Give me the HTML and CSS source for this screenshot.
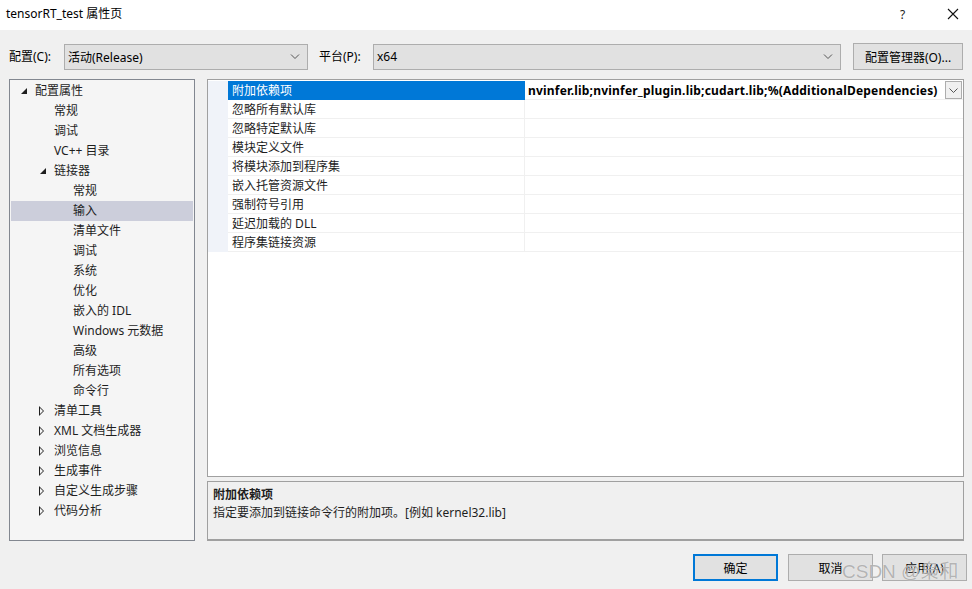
FILE: index.html
```html
<!DOCTYPE html>
<html lang="zh">
<head>
<meta charset="utf-8">
<title>tensorRT_test 属性页</title>
<link rel="stylesheet" href="styles.css">
</head>
<body>
<div class="window">
  <div class="titlebar">
    <span class="title">tensorRT_test 属性页</span>
    <span class="help">?</span>
    <span class="close"><svg width="12" height="12" viewBox="0 0 12 12"><path d="M1 1L11 11M11 1L1 11" stroke="#111" stroke-width="1.1" fill="none"/></svg></span>
  </div>

  <div class="toolbar">
    <span class="lbl lbl-cfg">配置(C):</span>
    <div class="combo combo-cfg"><span>活动(Release)</span><svg class="chev" width="10" height="6" viewBox="0 0 10 6"><path d="M1 0.5L5 4.5L9 0.5" stroke="#555" fill="none"/></svg></div>
    <span class="lbl lbl-plat">平台(P):</span>
    <div class="combo combo-plat"><span>x64</span><svg class="chev" width="10" height="6" viewBox="0 0 10 6"><path d="M1 0.5L5 4.5L9 0.5" stroke="#555" fill="none"/></svg></div>
    <div class="btn btn-mgr">配置管理器(O)...</div>
  </div>

  <div class="main">
    <div class="tree">
      <div class="node l0"><span class="exp"></span>配置属性</div>
      <div class="node l1">常规</div>
      <div class="node l1">调试</div>
      <div class="node l1">VC++ 目录</div>
      <div class="node l1 haskid"><span class="exp"></span>链接器</div>
      <div class="node l2">常规</div>
      <div class="node l2 sel">输入</div>
      <div class="node l2">清单文件</div>
      <div class="node l2">调试</div>
      <div class="node l2">系统</div>
      <div class="node l2">优化</div>
      <div class="node l2">嵌入的 IDL</div>
      <div class="node l2">Windows 元数据</div>
      <div class="node l2">高级</div>
      <div class="node l2">所有选项</div>
      <div class="node l2">命令行</div>
      <div class="node l1 haskid"><span class="col"></span>清单工具</div>
      <div class="node l1 haskid"><span class="col"></span>XML 文档生成器</div>
      <div class="node l1 haskid"><span class="col"></span>浏览信息</div>
      <div class="node l1 haskid"><span class="col"></span>生成事件</div>
      <div class="node l1 haskid"><span class="col"></span>自定义生成步骤</div>
      <div class="node l1 haskid"><span class="col"></span>代码分析</div>
    </div>

    <div class="right">
      <div class="grid">
        <div class="row selrow">
          <div class="gut"></div>
          <div class="name">附加依赖项</div>
          <div class="val"><span>nvinfer.lib;nvinfer_plugin.lib;cudart.lib;%(AdditionalDependencies)</span><div class="ddbtn"><svg width="9" height="5" viewBox="0 0 9 5"><path d="M0.5 0.5L4.5 4.5L8.5 0.5" stroke="#555" fill="none"/></svg></div></div>
        </div>
        <div class="row"><div class="gut"></div><div class="name">忽略所有默认库</div><div class="val"></div></div>
        <div class="row"><div class="gut"></div><div class="name">忽略特定默认库</div><div class="val"></div></div>
        <div class="row"><div class="gut"></div><div class="name">模块定义文件</div><div class="val"></div></div>
        <div class="row"><div class="gut"></div><div class="name">将模块添加到程序集</div><div class="val"></div></div>
        <div class="row"><div class="gut"></div><div class="name">嵌入托管资源文件</div><div class="val"></div></div>
        <div class="row"><div class="gut"></div><div class="name">强制符号引用</div><div class="val"></div></div>
        <div class="row"><div class="gut"></div><div class="name">延迟加载的 DLL</div><div class="val"></div></div>
        <div class="row"><div class="gut"></div><div class="name">程序集链接资源</div><div class="val"></div></div>
      </div>
      <div class="desc">
        <div class="desc-title">附加依赖项</div>
        <div class="desc-text">指定要添加到链接命令行的附加项。[例如 kernel32.lib]</div>
      </div>
    </div>
  </div>

  <div class="buttons">
    <div class="btn dbtn ok">确定</div>
    <div class="btn dbtn cancel">取消</div>
    <div class="btn dbtn apply">应用(A)</div>
  </div>

  <div class="watermark">CSDN @枭和</div>
</div>
</body>
</html>
```

FILE: styles.css
```css
* { box-sizing: border-box; }
html, body { margin: 0; padding: 0; }
body {
  width: 972px;
  height: 589px;
  overflow: hidden;
  background: #f0f0f0;
  font-family: "Noto Sans", "Noto Sans CJK SC", sans-serif;
  font-size: 12px;
  color: #000;
}
.window {
  position: relative;
  width: 972px;
  height: 589px;
}
.titlebar {
  height: 30px;
  background: #fff;
  display: flex;
  align-items: center;
  padding-left: 6px;
}
.title { flex: 1; font-size: 12px; line-height: 16px; margin-top: -2px; }
.help { width: 14px; font-size: 12px; margin-right: 33px; color: #222; margin-top: -2px; }
.close { width: 12px; height: 12px; margin-right: 13px; display: flex; margin-top: -2px; }

.toolbar {
  margin-top: 13px;
  height: 27px;
  display: flex;
  align-items: center;
}
.lbl { line-height: 26px; }
.lbl-cfg { margin-left: 9px; width: 55px; }
.lbl-plat { margin-left: 11px; width: 54px; }
.combo {
  height: 26px;
  background: #e1e1e1;
  border: 1px solid #adadad;
  display: flex;
  align-items: center;
  justify-content: space-between;
  padding: 0 7px 0 3px;
}
.combo-cfg { width: 244px; }
.combo-plat { width: 468px; }
.btn {
  background: #e1e1e1;
  border: 1px solid #adadad;
  display: flex;
  align-items: center;
  justify-content: center;
}
.btn-mgr { margin-left: 12px; width: 110px; height: 27px; }

.main {
  margin-top: 9px;
  display: flex;
  height: 462px;
}
.tree {
  margin-left: 9px;
  width: 186px;
  height: 462px;
  background: #f5f5f5;
  border: 1px solid #828790;
  padding-top: 1px;
}
.node {
  height: 20px;
  line-height: 20px;
  position: relative;
  color: #1e1e1e;
  white-space: nowrap;
}
.node.l0 { padding-left: 25px; }
.node.l1 { padding-left: 44px; }
.node.l2 { padding-left: 63px; }
.node.sel { background: #cccedb; margin: 0 1px; padding-left: 62px; }
.exp {
  position: absolute;
  top: 7px;
  width: 0; height: 0;
  border-left: 6px solid transparent;
  border-bottom: 6px solid #1e1e1e;
}
.l0 .exp { left: 11px; }
.l1 .exp { left: 30px; }
.col {
  position: absolute;
  top: 5px;
  left: 29px;
  width: 0; height: 0;
  border-top: 5px solid transparent;
  border-bottom: 5px solid transparent;
  border-left: 5px solid #1e1e1e;
}
.col::after {
  content: "";
  position: absolute;
  left: -4px;
  top: -3px;
  width: 0; height: 0;
  border-top: 3px solid transparent;
  border-bottom: 3px solid transparent;
  border-left: 3px solid #f5f5f5;
}

.right {
  margin-left: 12px;
  width: 757px;
  display: flex;
  flex-direction: column;
}
.grid {
  height: 398px;
  background: #fff;
  border: 1px solid #a0a0a0;
  padding-top: 1px;
}
.row {
  display: flex;
  height: 19px;
}
.gut { width: 20px; background: #f0f3f9; }
.name {
  width: 297px;
  padding-left: 4px;
  padding-top: 1px;
  line-height: 17px;
  border-bottom: 1px solid #f0f0f0;
  border-right: 1px solid #f0f0f0;
  color: #1e1e1e;
}
.val {
  flex: 1;
  border-bottom: 1px solid #f0f0f0;
  display: flex;
  align-items: center;
  justify-content: space-between;
  padding-left: 3px;
  font-weight: bold;
  line-height: 18px;
  letter-spacing: 0.2px;
}
.val span { padding-top: 1px; }
.selrow .name { background: #0078d7; color: #fff; border-color: #0078d7; }
.ddbtn {
  width: 17px;
  height: 18px;
  border: 1px solid #adadad;
  background: #f0f0f0;
  display: flex;
  align-items: center;
  justify-content: center;
  margin-right: 1px;
}
.desc {
  margin-top: 4px;
  height: 60px;
  background: #f0f0f0;
  border: 1px solid #a0a0a0;
  border-bottom: 2px solid #a0a0a0;
  padding: 4px 5px 3px;
  color: #1e1e1e;
}
.desc-title { font-weight: bold; line-height: 18px; }
.desc-text { line-height: 18px; }

.buttons {
  margin-top: 13px;
  display: flex;
  justify-content: flex-end;
  padding-right: 5px;
}
.dbtn { width: 85px; height: 27px; }
.ok { border: 2px solid #0078d7; margin-right: 10px; }
.cancel { margin-right: 9px; }

.watermark {
  position: absolute;
  left: 842px;
  top: 556px;
  font-family: "Liberation Sans", "Noto Sans CJK SC", sans-serif;
  font-size: 19px;
  color: rgba(150, 150, 150, 0.7);
  text-shadow: 0 0 1px rgba(255, 255, 255, 0.8);
  white-space: nowrap;
}
```
